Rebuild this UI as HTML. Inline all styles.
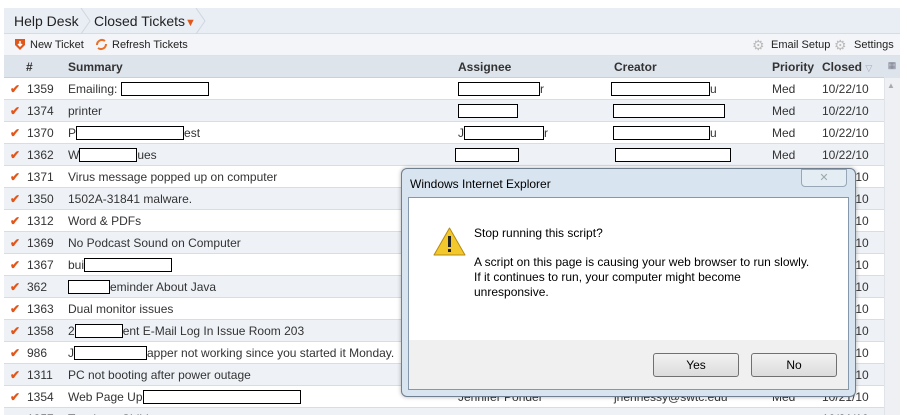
<!DOCTYPE html>
<html><head><meta charset="utf-8"><style>
*{margin:0;padding:0;box-sizing:border-box}
html,body{width:910px;height:415px;overflow:hidden}
body{background:#fff;font-family:"Liberation Sans",Arial,sans-serif;font-size:12px;color:#333;position:relative}
.abs{position:absolute}
.bc{left:4px;top:8px;width:896px;height:26px;background:#e9eef5;border-bottom:1px solid #d5dce6}
.tb{left:4px;top:34px;width:896px;height:22px;background:#f3f5f8;border-bottom:1px solid #dde2ea}
.hd{left:4px;top:56px;width:880px;height:22px;background:#dde4ec;font-weight:bold;border-bottom:1px solid #c8d0da}
.row{position:absolute;left:4px;width:880px;height:22px;border-bottom:1px solid #d7dde5;line-height:22px;font-size:12px;color:#333}
.row span,.hd span{position:absolute;white-space:nowrap}
.alt{background:#eef2f7}
.ck{left:6px;color:#e0561b;font-weight:bold}
.rb{display:inline-block;height:14px;border:1px solid #000;background:#fff;vertical-align:middle;position:relative;top:-1px}
.sb{left:884px;top:78px;width:16px;height:338px;background:#eef0f3;border-left:1px solid #e0e3e7}
.dt{font-family:"Liberation Sans",sans-serif;font-size:12px;color:#000}
</style></head><body>
<div class="abs bc"></div>
<div class="abs" style="left:14px;top:13px;font-size:14px;color:#222">Help Desk</div>
<svg class="abs" style="left:80px;top:8px" width="12" height="26"><path d="M1 0 L10 13 L1 26" fill="none" stroke="#cfd6df"/></svg>
<div class="abs" style="left:94px;top:13px;font-size:14px;color:#222">Closed Tickets<span style="color:#e0561b;font-size:11px">&#9660;</span></div>
<svg class="abs" style="left:195px;top:8px" width="12" height="26"><path d="M1 0 L10 13 L1 26" fill="none" stroke="#cfd6df"/></svg>
<div class="abs tb"></div>
<svg class="abs" style="left:14px;top:38px" width="12" height="13"><path d="M1 1h10v6l-5 5l-5-5z" fill="#e0561b"/><path d="M6 3v5M4 6l2 2 2-2" stroke="#fff" fill="none" stroke-width="1.5"/></svg>
<div class="abs" style="left:30px;top:39px;font-size:11px;color:#222">New Ticket</div>
<svg class="abs" style="left:95px;top:38px" width="13" height="13"><path d="M2 7a5 5 0 0 1 8-4M11 6a5 5 0 0 1-8 4" fill="none" stroke="#e8702a" stroke-width="2"/></svg>
<div class="abs" style="left:112px;top:39px;font-size:11px;color:#222">Refresh Tickets</div>
<div class="abs" style="left:752px;top:37px;color:#bbb;font-size:14px">&#9881;</div>
<div class="abs" style="left:771px;top:39px;font-size:11px;color:#222">Email Setup</div>
<div class="abs" style="left:834px;top:37px;color:#bbb;font-size:14px">&#9881;</div>
<div class="abs" style="left:854px;top:39px;font-size:11px;color:#222">Settings</div>
<div class="abs hd" style="line-height:22px">
<span style="left:22px">#</span><span style="left:64px">Summary</span><span style="left:454px">Assignee</span><span style="left:610px">Creator</span><span style="left:768px">Priority</span><span style="left:818px">Closed <span style="position:static;color:#aab;font-weight:normal;font-size:9px">&#9661;</span></span>
</div>
<div class="abs" style="left:884px;top:56px;width:16px;height:22px;background:#dde4ec;color:#778;font-size:9px;text-align:center;line-height:18px">&#9638;</div>

<div class="row" style="top:78px"><span class="ck">✔</span><span style="left:23px">1359</span><span style="left:64px">Emailing: <i class="rb" style="width:88px"></i></span><span style="left:454px"><i class="rb" style="width:82px"></i>r</span><span style="left:607px"><i class="rb" style="width:99px"></i>u</span><span style="left:768px">Med</span><span style="left:818px">10/22/10</span></div>
<div class="row alt" style="top:100px"><span class="ck">✔</span><span style="left:23px">1374</span><span style="left:64px">printer</span><span style="left:454px"><i class="rb" style="width:60px"></i></span><span style="left:609px"><i class="rb" style="width:112px"></i></span><span style="left:768px">Med</span><span style="left:818px">10/22/10</span></div>
<div class="row" style="top:122px"><span class="ck">✔</span><span style="left:23px">1370</span><span style="left:64px">P<i class="rb" style="width:108px"></i>est</span><span style="left:454px">J<i class="rb" style="width:80px"></i>r</span><span style="left:609px"><i class="rb" style="width:97px"></i>u</span><span style="left:768px">Med</span><span style="left:818px">10/22/10</span></div>
<div class="row alt" style="top:144px"><span class="ck">✔</span><span style="left:23px">1362</span><span style="left:64px">W<i class="rb" style="width:58px"></i>ues</span><span style="left:451px"><i class="rb" style="width:64px"></i></span><span style="left:611px"><i class="rb" style="width:116px"></i></span><span style="left:768px">Med</span><span style="left:818px">10/22/10</span></div>
<div class="row" style="top:166px"><span class="ck">✔</span><span style="left:23px">1371</span><span style="left:64px">Virus message popped up on computer</span><span style="left:818px">10/22/10</span></div>
<div class="row alt" style="top:188px"><span class="ck">✔</span><span style="left:23px">1350</span><span style="left:64px">1502A-31841 malware.</span><span style="left:818px">10/22/10</span></div>
<div class="row" style="top:210px"><span class="ck">✔</span><span style="left:23px">1312</span><span style="left:64px">Word &amp; PDFs</span><span style="left:818px">10/22/10</span></div>
<div class="row alt" style="top:232px"><span class="ck">✔</span><span style="left:23px">1369</span><span style="left:64px">No Podcast Sound on Computer</span><span style="left:818px">10/22/10</span></div>
<div class="row" style="top:254px"><span class="ck">✔</span><span style="left:23px">1367</span><span style="left:64px">bui<i class="rb" style="width:88px"></i></span><span style="left:818px">10/22/10</span></div>
<div class="row alt" style="top:276px"><span class="ck">✔</span><span style="left:23px">362</span><span style="left:64px"><i class="rb" style="width:42px"></i>eminder About Java</span><span style="left:818px">10/22/10</span></div>
<div class="row" style="top:298px"><span class="ck">✔</span><span style="left:23px">1363</span><span style="left:64px">Dual monitor issues</span><span style="left:818px">10/22/10</span></div>
<div class="row alt" style="top:320px"><span class="ck">✔</span><span style="left:23px">1358</span><span style="left:64px">2<i class="rb" style="width:48px"></i>ent E-Mail Log In Issue Room 203</span><span style="left:818px">10/22/10</span></div>
<div class="row" style="top:342px"><span class="ck">✔</span><span style="left:23px">986</span><span style="left:64px">J<i class="rb" style="width:73px"></i>apper not working since you started it Monday.</span><span style="left:818px">10/22/10</span></div>
<div class="row alt" style="top:364px"><span class="ck">✔</span><span style="left:23px">1311</span><span style="left:64px">PC not booting after power outage</span><span style="left:818px">10/22/10</span></div>
<div class="row" style="top:386px"><span class="ck">✔</span><span style="left:23px">1354</span><span style="left:64px">Web Page Up<i class="rb" style="width:158px"></i></span><span style="left:454px">Jennifer Ponder</span><span style="left:610px">jhennessy@swtc.edu</span><span style="left:768px">Med</span><span style="left:818px">10/21/10</span></div>
<div class="row alt" style="top:408px"><span class="ck">✔</span><span style="left:23px">1357</span><span style="left:64px">Teacher - Child</span><span style="left:818px">10/21/10</span></div>
<div class="abs sb"></div>
<div class="abs" style="left:887px;top:81px;color:#aaa;font-size:8px">&#9650;</div>

<!-- dialog -->
<div class="abs" style="left:401px;top:168px;width:455px;height:229px;background:#d8e4f0;border:1px solid #6f7f90;border-radius:6px;box-shadow:0 0 4px rgba(0,0,0,.3)"></div>
<div class="abs dt" style="left:410px;top:177px">Windows Internet Explorer</div>
<div class="abs" style="left:801px;top:169px;width:46px;height:18px;border:1px solid #98a6b5;border-radius:0 0 4px 4px;background:#e4ecf4;color:#9aa;text-align:center;font-size:11px;line-height:16px">✕</div>
<div class="abs" style="left:408px;top:197px;width:441px;height:193px;background:#fff;border:1px solid #8597aa"></div>
<div class="abs" style="left:409px;top:340px;width:439px;height:49px;background:#f0f0f0"></div>
<svg class="abs" style="left:433px;top:227px" width="33" height="30"><path d="M16.5 1 L32 28 H1 Z" fill="#f3c82c" stroke="#b58a10" stroke-linejoin="round"/><rect x="15" y="9" width="3" height="11" fill="#222"/><rect x="15" y="22" width="3" height="3" fill="#222"/></svg>
<div class="abs dt" style="left:474px;top:226px;line-height:15px">Stop running this script?</div>
<div class="abs dt" style="left:474px;top:255px;line-height:15px;width:380px">A script on this page is causing your web browser to run slowly.<br>If it continues to run, your computer might become<br>unresponsive.</div>
<div class="abs dt" style="left:653px;top:353px;width:86px;height:24px;border:1px solid #707070;border-radius:3px;background:linear-gradient(#f2f2f2,#dcdcdc);text-align:center;line-height:22px">Yes</div>
<div class="abs dt" style="left:751px;top:353px;width:86px;height:24px;border:1px solid #707070;border-radius:3px;background:linear-gradient(#f2f2f2,#dcdcdc);text-align:center;line-height:22px">No</div>
</body></html>
